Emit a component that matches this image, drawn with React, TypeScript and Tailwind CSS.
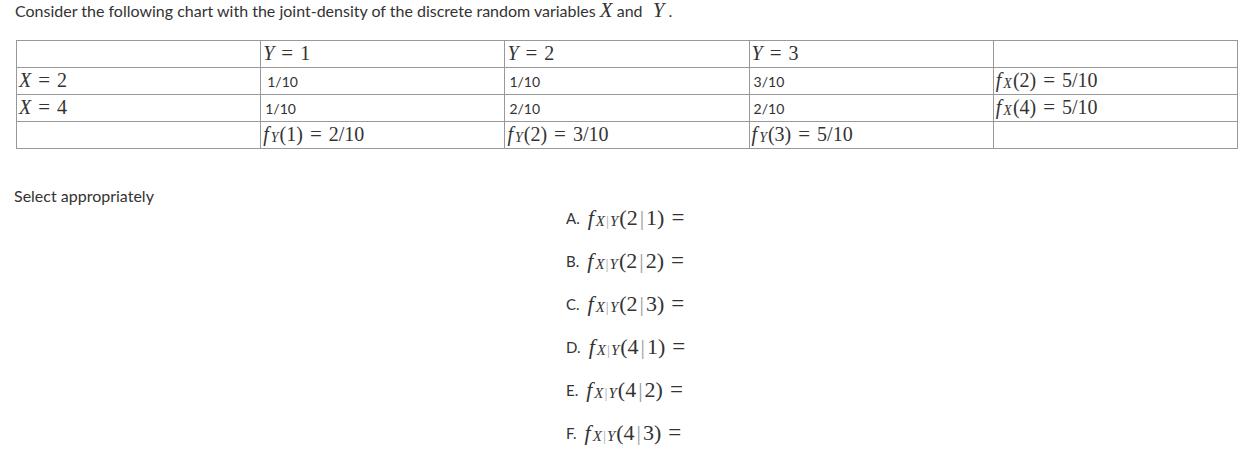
const serif = "font-['Liberation_Serif','DejaVu_Serif',serif]";

function V({ children }: { children: React.ReactNode }) {
  return <span className="italic">{children}</span>;
}

function MathText({ children }: { children: React.ReactNode }) {
  return <span className={`${serif} text-[20px] leading-[20px] text-[#333] whitespace-nowrap`}>{children}</span>;
}

function Eq() {
  return <span className="mx-[7px] text-[21px]">=</span>;
}

function Marginal({ sub, arg, val }: { sub: string; arg: string; val: string }) {
  return (
    <MathText>
      <V>f</V>
      <sub className="italic text-[14px] relative -bottom-[1px] ml-[2px] mr-[1px]">{sub}</sub>
      ({arg})<Eq />
      {val}
    </MathText>
  );
}

function Cond({ label, x, y }: { label: string; x: string; y: string }) {
  return (
    <div className="flex items-center gap-[8px] h-[20px]">
      <span className="text-[15px] text-[#333]">{label}</span>
      <span className={`${serif} text-[22px] text-[#333] whitespace-nowrap`}>
        <V>f</V>
        <sub className="italic text-[15px] relative -bottom-[1px] ml-[2px] mr-[1px]">
          X<span className="not-italic text-[#aaa] mx-[1px]">|</span>Y
        </sub>
        ({x}
        <span className="text-[#999] mx-[2px]">|</span>
        {y})<span className="mx-[7px] text-[23px]">=</span>
      </span>
    </div>
  );
}

const cell = 'border border-[#999] h-[27px] px-[2px] align-middle text-left w-[244px]';
const plain = 'text-[14px] text-[#333] pl-[2px]';

export default function App() {
  return (
    <div className="w-[1251px] h-[469px] bg-white font-['Lato','Open_Sans',sans-serif] text-[#333]">
      <p className="text-[16px] pl-[15px] pt-0 leading-[21px]">
        Consider the following chart with the joint-density of the discrete random variables{' '}
        <span className={`${serif} italic text-[21px]`}>X</span> and{' '}
        <span className={`${serif} italic text-[21px] ml-[6px]`}>Y</span> .
      </p>
      <table className="ml-[16px] mt-[19px] border-collapse border border-[#333] w-[1222px] table-fixed">
        <tbody>
          <tr>
            <td className={cell}></td>
            <td className={cell}>
              <MathText>
                <V>Y</V>
                <Eq />1
              </MathText>
            </td>
            <td className={cell}>
              <MathText>
                <V>Y</V>
                <Eq />2
              </MathText>
            </td>
            <td className={cell}>
              <MathText>
                <V>Y</V>
                <Eq />3
              </MathText>
            </td>
            <td className={cell}></td>
          </tr>
          <tr>
            <td className={cell}>
              <MathText>
                <V>X</V>
                <Eq />2
              </MathText>
            </td>
            <td className={cell}>
              <span className={`${plain} pl-[4px]`}>1/10</span>
            </td>
            <td className={cell}>
              <span className={plain}>1/10</span>
            </td>
            <td className={cell}>
              <span className={plain}>3/10</span>
            </td>
            <td className={cell}>
              <Marginal sub="X" arg="2" val="5/10" />
            </td>
          </tr>
          <tr>
            <td className={cell}>
              <MathText>
                <V>X</V>
                <Eq />4
              </MathText>
            </td>
            <td className={cell}>
              <span className={plain}>1/10</span>
            </td>
            <td className={cell}>
              <span className={plain}>2/10</span>
            </td>
            <td className={cell}>
              <span className={plain}>2/10</span>
            </td>
            <td className={cell}>
              <Marginal sub="X" arg="4" val="5/10" />
            </td>
          </tr>
          <tr>
            <td className={cell}></td>
            <td className={cell}>
              <Marginal sub="Y" arg="1" val="2/10" />
            </td>
            <td className={cell}>
              <Marginal sub="Y" arg="2" val="3/10" />
            </td>
            <td className={cell}>
              <Marginal sub="Y" arg="3" val="5/10" />
            </td>
            <td className={cell}></td>
          </tr>
        </tbody>
      </table>
      <p className="text-[16px] pl-[14px] mt-[37px] leading-[20px]">Select appropriately</p>
      <div className="ml-[566px] mt-[2px] flex flex-col gap-[23px]">
        <Cond label="A." x="2" y="1" />
        <Cond label="B." x="2" y="2" />
        <Cond label="C." x="2" y="3" />
        <Cond label="D." x="4" y="1" />
        <Cond label="E." x="4" y="2" />
        <Cond label="F." x="4" y="3" />
      </div>
    </div>
  );
}
